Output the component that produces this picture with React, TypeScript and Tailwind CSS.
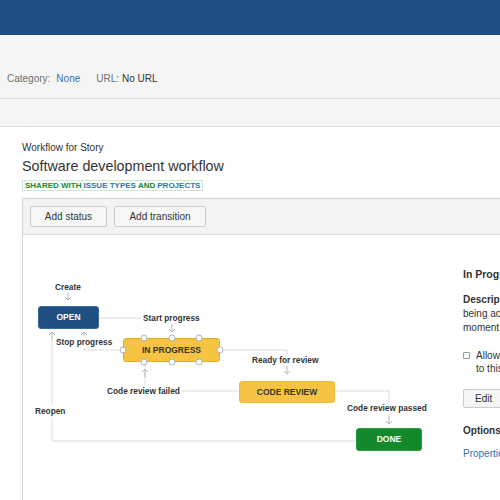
import React from "react";

const LINE = "#dedede";
const ARROW = "#b5b5b5";

type Dir = "up" | "down";

const connectors = [
  "M99 318 H172 V324",
  "M123 350 H84 V340",
  "M356 441 H52 V340",
  "M220 350 H287 V366",
  "M239 391 H145 V361",
  "M335 391 H389 V416",
];

const arrows: { x: number; y: number; dir: Dir }[] = [
  { x: 68, y: 300, dir: "down" },
  { x: 172, y: 332, dir: "down" },
  { x: 84, y: 332, dir: "up" },
  { x: 52, y: 332, dir: "up" },
  { x: 287, y: 374, dir: "down" },
  { x: 145, y: 369, dir: "up" },
  { x: 389, y: 424, dir: "down" },
];

const handles = [
  [144, 338], [172, 338], [199, 338],
  [144, 362], [172, 362], [199, 362],
  [123, 350], [220, 350],
];

function Arrow({ x, y, dir }: { x: number; y: number; dir: Dir }) {
  const s = dir === "down" ? -1 : 1;
  return (
    <g stroke={ARROW} strokeWidth={1} fill="none">
      <line x1={x} y1={y + s * 8} x2={x} y2={y} />
      <polyline points={`${x - 3},${y + s * 3} ${x},${y} ${x + 3},${y + s * 3}`} />
    </g>
  );
}

function Label({ text, className }: { text: string; className: string }) {
  return (
    <span className={`absolute bg-white px-[2px] text-[8.3px] font-bold leading-[12px] text-[#333] whitespace-nowrap ${className}`}>
      {text}
    </span>
  );
}

function Node({ text, className }: { text: string; className: string }) {
  return (
    <div className={`absolute flex items-center justify-center rounded-[3px] border text-[8.5px] font-bold ${className}`}>
      {text}
    </div>
  );
}

function Diagram() {
  return (
    <div className="relative w-[425px] h-[265px] shrink-0">
      <svg className="absolute inset-0" width={425} height={265} viewBox="23 235 425 265">
        {connectors.map((d) => (
          <path key={d} d={d} stroke={LINE} strokeWidth={1} fill="none" />
        ))}
        {arrows.map((a, i) => (
          <Arrow key={i} {...a} />
        ))}
      </svg>

      <Label text="Create" className="left-[30px] top-[46px]" />
      <Label text="Start progress" className="left-[118px] top-[77px]" />
      <Label text="Stop progress" className="left-[31px] top-[101px]" />
      <Label text="Ready for review" className="left-[227px] top-[119px]" />
      <Label text="Code review failed" className="left-[82px] top-[150px]" />
      <Label text="Reopen" className="left-[10px] top-[170px]" />
      <Label text="Code review passed" className="left-[322px] top-[167px]" />

      <Node text="OPEN" className="left-[15px] top-[71px] w-[61px] h-[23px] bg-[#205081] border-[#3a6a9a] text-white" />
      <Node text="IN PROGRESS" className="left-[100px] top-[103px] w-[97px] h-[24px] bg-[#f6c342] border-[#e4ad2a] text-[#333]" />
      <Node text="CODE REVIEW" className="left-[216px] top-[146px] w-[96px] h-[22px] bg-[#f6c342] border-[#f0bd3c] text-[#333]" />
      <Node text="DONE" className="left-[333px] top-[193px] w-[66px] h-[23px] bg-[#14892c] border-[#2a9a40] text-white" />

      <svg className="absolute inset-0 pointer-events-none" width={425} height={265} viewBox="23 235 425 265">
        {handles.map(([cx, cy]) => (
          <circle key={`${cx}-${cy}`} cx={cx} cy={cy} r={3} fill="#fff" stroke="#9aa4b0" strokeWidth={0.8} />
        ))}
      </svg>
    </div>
  );
}

function Sidebar() {
  return (
    <div className="flex-1 min-w-0 overflow-hidden pl-[15px] text-[10px] text-[#333] whitespace-nowrap">
      <div className="mt-[32px] font-bold leading-[14px] text-[10.5px]">In Progress</div>
      <div className="mt-[12px] leading-[14px]">
        <div>
          <span className="font-bold">Description</span> This issue is
        </div>
        <div>being actively worked on at the</div>
        <div>moment by the assignee.</div>
      </div>
      <div className="mt-[14px] flex leading-[13px]">
        <span className="mt-[3px] w-[7px] h-[7px] border border-[#999] rounded-[1px] shrink-0" />
        <div className="ml-[6px]">
          <div>Allow all statuses to transition</div>
          <div>to this status</div>
        </div>
      </div>
      <div className="mt-[14px] flex">
        <button className="h-[19px] px-[11px] border border-[#ccc] bg-[#f5f5f5] rounded-[2px] text-[10px] text-[#333]">Edit</button>
        <button className="ml-[6px] h-[19px] px-[11px] border border-[#ccc] bg-[#f5f5f5] rounded-[2px] text-[10px] text-[#333]">Delete</button>
      </div>
      <div className="mt-[16px] font-bold leading-[14px]">Options</div>
      <div className="mt-[9px] leading-[14px] text-[#3572b0]">Properties</div>
    </div>
  );
}

export default function App() {
  return (
    <div className="w-[500px] h-[500px] overflow-hidden bg-white font-['Liberation_Sans',Arial,sans-serif]">
      <div className="h-[35px] bg-[#205081]" />
      <div className="h-[64px] bg-[#f5f5f5] border-b border-[#dcdcdc] pt-[38px] pl-[7px] text-[10px] leading-[12px] flex">
        <span className="text-[#707070]">Category:</span>
        <span className="ml-[6px] text-[#3572b0]">None</span>
        <span className="ml-[16px] text-[#707070]">URL:</span>
        <span className="ml-[3px] text-[#333]">No URL</span>
      </div>
      <div className="h-[28px] bg-[#f5f5f5] border-b border-[#dcdcdc]" />

      <div className="pt-[15px] pl-[22px]">
        <div className="text-[10px] leading-[12px] text-[#333]">Workflow for Story</div>
        <h1 className="mt-[4px] text-[14.3px] leading-[17px] text-[#333]">Software development workflow</h1>
        <div className="mt-[5px] flex">
          <div className="flex h-[11px] items-center border border-[#cde8d2] px-[2px] text-[8px] font-bold leading-[9px] whitespace-nowrap">
            <span className="text-[#14892c]">SHARED WITH</span>
            <span className="ml-[2px] text-[#3572b0]">ISSUE TYPES</span>
            <span className="ml-[2px] text-[#14892c]">AND</span>
            <span className="ml-[2px] text-[#3572b0]">PROJECTS</span>
          </div>
        </div>

        <div className="mt-[7px] w-[600px] border-l border-t border-[#d5d5d5]">
          <div className="h-[36px] bg-[#f3f3f3] border-b border-[#dcdcdc] flex items-start gap-[7px] pl-[7px] pt-[7px]">
            <button className="w-[77px] h-[21px] border border-[#ccc] bg-[#f7f7f7] rounded-[2px] text-[10px] text-[#333]">Add status</button>
            <button className="w-[92px] h-[21px] border border-[#ccc] bg-[#f7f7f7] rounded-[2px] text-[10px] text-[#333]">Add transition</button>
          </div>
          <div className="flex">
            <Diagram />
            <Sidebar />
          </div>
        </div>
      </div>
    </div>
  );
}
